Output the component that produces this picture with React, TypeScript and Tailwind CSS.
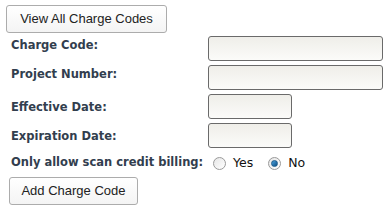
import React, { useState } from 'react'

const label = `text-[11.5px] leading-[13px] font-bold text-[#323e4e]`
const input = `h-[25px] rounded-[3px] border border-[#6a6a6a] bg-gradient-to-b from-[#efeee9] to-[#fbfbf9]`
const button = `h-[28px] rounded-[3px] border border-[#acacac] bg-gradient-to-b from-white to-[#f4f4f4] text-[13px] text-[#222] font-['Liberation_Sans',Arial,sans-serif]`

function Radio({ checked, onClick }: { checked: boolean; onClick: () => void }) {
  return (
    <span
      onClick={onClick}
      className="ml-[5px] mr-[7px] flex h-[13px] w-[13px] items-center justify-center rounded-full border border-[#9a9a9a] bg-gradient-to-br from-[#e6e6e6] to-white"
    >
      {checked && (
        <span className="h-[7px] w-[7px] rounded-full border border-[#1a5a8a] bg-gradient-to-br from-[#4aa3dd] to-[#0c4f86]" />
      )}
    </span>
  )
}

export default function App() {
  const [scan, setScan] = useState(false)

  return (
    <div className="h-[211px] w-[389px] bg-white font-['DejaVu_Sans',Verdana,sans-serif]">
      <div className="pl-[6px] pt-[5px]">
        <button className={`${button} w-[161px]`}>View All Charge Codes</button>
      </div>

      <div className="mt-[3px] grid grid-cols-[197px_auto] gap-y-[4px] pl-[11px]">
        <div className={`${label} pt-[3px]`}>Charge Code:</div>
        <div className={`${input} w-[175px]`} />

        <div className={`${label} pt-[3px]`}>Project Number:</div>
        <div className={`${input} w-[175px]`} />

        <div className={`${label} pt-[7px]`}>Effective Date:</div>
        <div className={`${input} w-[84px]`} />

        <div className={`${label} pt-[7px]`}>Expiration Date:</div>
        <div className={`${input} w-[84px]`} />

        <div className={`${label} whitespace-nowrap pt-[4px]`}>Only allow scan credit billing:</div>
        <div className="flex h-[22px] items-center pt-[1px] text-[12.5px] text-[#111]">
          <Radio checked={scan} onClick={() => setScan(true)} />
          <span className="mr-[10px]">Yes</span>
          <Radio checked={!scan} onClick={() => setScan(false)} />
          <span>No</span>
        </div>
      </div>

      <div className="pl-[9px] pt-[3px]">
        <button className={`${button} w-[129px]`}>Add Charge Code</button>
      </div>
    </div>
  )
}
